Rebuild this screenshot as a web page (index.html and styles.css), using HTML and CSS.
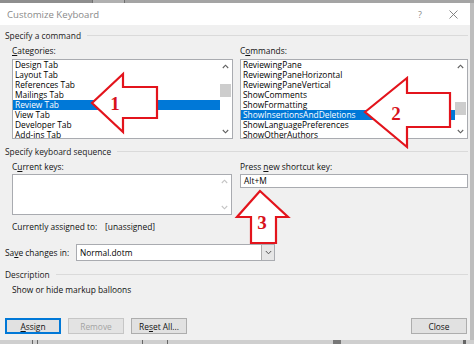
FILE: index.html
```html
<!DOCTYPE html>
<html>
<head>
<meta charset="utf-8">
<link rel="stylesheet" href="styles.css">
</head>
<body>
<div class="screen">
  <div class="topstrip">
    <span class="seg dark"></span><span class="seg mid"></span><span class="seg light"></span>
  </div>
  <div class="main">
    <div class="dialog">
      <div class="titlebar">
        <span class="title">Customize Keyboard</span>
        <span class="help">?</span>
        <svg class="closex" width="9" height="9" viewBox="0 0 9 9"><path d="M0.5 0.5 L8.5 8.5 M8.5 0.5 L0.5 8.5" stroke="#777" stroke-width="0.9" fill="none"/></svg>
      </div>
      <div class="body">
        <div class="group"><span class="gtext">Specify a command</span><span class="gline"></span></div>
        <div class="cols">
          <div class="col">
            <div class="label"><u>C</u>ategories:</div>
            <div class="listbox">
              <ul class="items">
                <li>Design Tab</li>
                <li>Layout Tab</li>
                <li>References Tab</li>
                <li>Mailings Tab</li>
                <li class="sel">Review Tab</li>
                <li>View Tab</li>
                <li>Developer Tab</li>
                <li>Add-ins Tab</li>
              </ul>
              <div class="scrollbar">
                <svg class="chev" width="7" height="5" viewBox="0 0 7 5"><polyline points="0.8,4 3.5,1.2 6.2,4" fill="none" stroke="#606060" stroke-width="1.1"/></svg>
                <div class="track"><div class="thumb cat"></div></div>
                <svg class="chev" width="7" height="5" viewBox="0 0 7 5"><polyline points="0.8,1 3.5,3.8 6.2,1" fill="none" stroke="#606060" stroke-width="1.1"/></svg>
              </div>
            </div>
          </div>
          <div class="col">
            <div class="label">C<u>o</u>mmands:</div>
            <div class="listbox">
              <ul class="items">
                <li>ReviewingPane</li>
                <li>ReviewingPaneHorizontal</li>
                <li>ReviewingPaneVertical</li>
                <li>ShowComments</li>
                <li>ShowFormatting</li>
                <li class="sel">ShowInsertionsAndDeletions</li>
                <li>ShowLanguagePreferences</li>
                <li>ShowOtherAuthors</li>
              </ul>
              <div class="scrollbar">
                <svg class="chev" width="7" height="5" viewBox="0 0 7 5"><polyline points="0.8,4 3.5,1.2 6.2,4" fill="none" stroke="#606060" stroke-width="1.1"/></svg>
                <div class="track"><div class="thumb cmd"></div></div>
                <svg class="chev" width="7" height="5" viewBox="0 0 7 5"><polyline points="0.8,1 3.5,3.8 6.2,1" fill="none" stroke="#606060" stroke-width="1.1"/></svg>
              </div>
            </div>
          </div>
        </div>

        <div class="group g2"><span class="gtext">Specify keyboard sequence</span><span class="gline"></span></div>
        <div class="cols">
          <div class="col">
            <div class="label">C<u>u</u>rrent keys:</div>
            <div class="keysbox">
              <div class="keyspace"></div>
              <div class="scrollbar dis">
                <svg class="chev" width="7" height="5" viewBox="0 0 7 5"><polyline points="0.8,4 3.5,1.2 6.2,4" fill="none" stroke="#c4c4c4" stroke-width="1.1"/></svg>
                <div class="track"></div>
                <svg class="chev" width="7" height="5" viewBox="0 0 7 5"><polyline points="0.8,1 3.5,3.8 6.2,1" fill="none" stroke="#c4c4c4" stroke-width="1.1"/></svg>
              </div>
            </div>
            <div class="assigned"><span class="alabel">Currently assigned to:</span><span>[unassigned]</span></div>
          </div>
          <div class="col">
            <div class="label">Press <u>n</u>ew shortcut key:</div>
            <div class="input">Alt+M</div>
          </div>
        </div>

        <div class="saverow">
          <span class="slabel">Sa<u>v</u>e changes in:</span>
          <div class="dropdown">
            <span class="dval">Normal.dotm</span>
            <span class="dbtn"><svg width="7" height="5" viewBox="0 0 7 5"><polyline points="0.8,1 3.5,3.8 6.2,1" fill="none" stroke="#555" stroke-width="1"/></svg></span>
          </div>
        </div>

        <div class="group g3"><span class="gtext">Description</span><span class="gline"></span></div>
        <div class="desc">Show or hide markup balloons</div>

        <div class="buttons">
          <span class="btn default"><u>A</u>ssign</span>
          <span class="btn disabled">Remove</span>
          <span class="btn">Re<u>s</u>et All...</span>
          <span class="btn close">Close</span>
        </div>
      </div>
    </div>
    <div class="rightedge"></div>
  </div>
  <div class="bottomstrip">
    <span class="mark m1"></span><span class="mark m2"></span><span class="mark m3"></span><span class="mark m4"></span><span class="mark m5"></span><span class="mark m6"></span>
  </div>

  <svg class="arrows" width="474" height="344" viewBox="0 0 474 344">
    <polygon points="92,103 123,74 123,87 157,87 157,118 123,118 123,132" fill="#fff" stroke="#e3141c" stroke-width="2.2" stroke-linejoin="miter"/>
    <text x="115" y="110" class="num">1</text>
    <polygon points="365,112 407,78 407,93 450,93 450,127 407,127 407,147" fill="#fff" stroke="#e3141c" stroke-width="2.2" stroke-linejoin="miter"/>
    <text x="396" y="120" class="num">2</text>
    <polygon points="260,191 237,217 251,217 251,243 276,243 276,217 288,217" fill="#fff" stroke="#e3141c" stroke-width="2.2" stroke-linejoin="miter"/>
    <text x="262" y="229" class="num">3</text>
  </svg>
</div>
</body>
</html>
```

FILE: styles.css
```css
* { box-sizing: border-box; }
html, body { margin: 0; padding: 0; }
body {
  width: 474px;
  height: 344px;
  overflow: hidden;
  background: #c6c6c6;
  font-family: "Open Sans", "Noto Sans", sans-serif;
  font-size: 8.4px;
  color: #111;
}
.screen { position: relative; width: 474px; height: 344px; }
.topstrip { display: flex; height: 3px; background: #a8a8a8; }
.topstrip .seg { height: 3px; }
.topstrip .dark { width: 92px; background: #8e8e8e; }
.topstrip .mid { width: 33px; background: #b0b0b0; border-left: 1px solid #707070; border-right: 1px solid #707070; }
.topstrip .light { flex: 1; background: #a4a4a4; }

.main { display: flex; height: 337px; }
.dialog { width: 470px; height: 337px; background: #f0f0f0; display: flex; flex-direction: column; }
.rightedge { width: 4px; background: #bdbdbd; }

.titlebar {
  height: 22px;
  background: #fff;
  display: flex;
  align-items: center;
  padding-left: 7px;
}
.title { font-size: 9.6px; color: #8a8a8a; flex: 1; }
.help { font-size: 9px; color: #8a8a8a; width: 10px; margin-right: 21px; }
.closex { margin-right: 12px; }

.body { padding: 4px 2px 0 5px; display: flex; flex-direction: column; }

.group { display: flex; align-items: center; height: 12px; }
.gtext { color: #1a1a1a; }
.gline { flex: 1; height: 1px; background: #dadada; margin-left: 6px; }
.group.g2 { margin-top: 6px; }
.group.g3 { margin-top: 7px; }

.cols { display: grid; grid-template-columns: 221px 228px; column-gap: 7px; padding-left: 7px; }
.col { display: flex; flex-direction: column; }
.label { height: 12px; line-height: 12px; margin-top: 4px; }
u { text-decoration: underline; text-underline-offset: 1px; }

.listbox {
  margin-top: 2px;
  height: 80px;
  border: 1px solid #a9abb0;
  background: #fff;
  display: flex;
}
.items { list-style: none; margin: 0; padding: 0; flex: 1; }
.items li { height: 10px; line-height: 10px; padding-left: 2px; white-space: nowrap; color: #000; }
.items li.sel { background: #0078d7; color: #fff; }

.scrollbar { width: 11px; margin-right: 1px; display: flex; flex-direction: column; align-items: center; }
.scrollbar .chev { margin: 4px 0 3px; }
.scrollbar .chev:last-child { margin: 3px 0 4px; }
.track { flex: 1; width: 11px; position: relative; }
.thumb { width: 11px; background: #cdcdcd; }
.thumb.cat { margin-top: 12px; height: 13px; }
.thumb.cmd { margin-top: 30px; height: 13px; }

.keysbox {
  margin-top: 1px;
  height: 41px;
  width: 220px;
  border: 1px solid #a9abb0;
  background: #fff;
  display: flex;
}
.keyspace { flex: 1; }
.scrollbar.dis .chev { margin-top: 4px; }

.input {
  margin-top: 1px;
  height: 14px;
  border: 1px solid #a9abb0;
  background: #fff;
  line-height: 12px;
  padding-left: 3px;
  color: #000;
}

.assigned { margin-top: 6px; height: 12px; line-height: 12px; display: flex; }
.alabel { width: 93px; }

.saverow { display: flex; align-items: center; margin-top: 11px; height: 17px; }
.slabel { width: 71px; }
.dropdown {
  width: 199px;
  height: 17px;
  border: 1px solid #a9abb0;
  background: #fff;
  display: flex;
  align-items: center;
}
.dval { flex: 1; padding-left: 3px; color: #000; }
.dbtn {
  width: 13px;
  height: 15px;
  background: #e6e6e6;
  border-left: 1px solid #acacac;
  display: flex;
  align-items: center;
  justify-content: center;
}

.desc { margin-top: 4px; padding-left: 7px; height: 12px; line-height: 12px; }

.buttons { display: flex; margin-top: 22px; gap: 7px; padding-right: 1px; }
.btn {
  width: 56px;
  height: 16px;
  border: 1px solid #adadad;
  background: #e1e1e1;
  display: flex;
  align-items: center;
  justify-content: center;
  color: #111;
}
.btn.default { border: 1px solid #0078d7; box-shadow: inset 0 0 0 1px #0078d7; }
.btn.disabled { color: #a3a3a3; background: #e3e3e3; border-color: #c6c6c6; }
.btn.close { margin-left: auto; }

.bottomstrip { height: 4px; background: #cfcfcf; display: flex; position: relative; }
.mark { position: absolute; top: 0; height: 4px; background: #666; width: 1px; }
.m1 { left: 32px; } .m2 { left: 37px; } .m3 { left: 142px; } .m4 { left: 167px; }
.m5 { left: 333px; width: 8px; background: #777; } .m6 { left: 463px; width: 3px; }

.arrows { position: absolute; left: 0; top: 0; pointer-events: none; }
.num {
  font-family: "Liberation Serif", serif;
  font-weight: bold;
  font-size: 19px;
  fill: #d8121c;
  text-anchor: middle;
}
```
